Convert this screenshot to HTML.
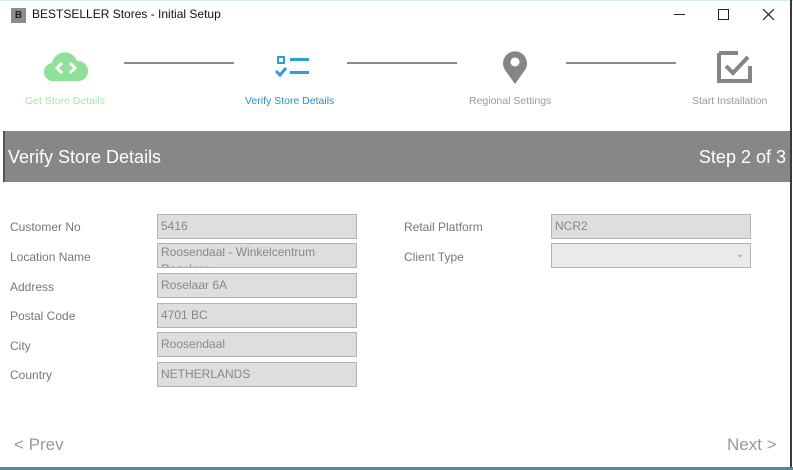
<!DOCTYPE html>
<html><head><style>
body{margin:0;width:793px;height:470px;background:#fff;font-family:"Liberation Sans",sans-serif;position:relative;overflow:hidden}
.a{position:absolute}
.lbl{position:absolute;font-size:12px;color:#777;left:10px}
.fld{position:absolute;background:#dedede;border:1px solid #b3b3b3;font-size:12px;color:#888;line-height:22px;padding-left:3px;box-sizing:border-box;width:200px;height:25px;overflow:hidden}
.line{position:absolute;height:2px;background:#8a8a8a;top:62px;width:110px}
.st{position:absolute;font-size:10.5px;top:95px;color:#999}
</style></head><body>
<div class="a" style="left:0;top:0;width:793px;height:1px;background:#d8eef5"></div>
<div class="a" style="left:790px;top:0;width:2px;height:470px;background:#3a3a3a"></div>
<div class="a" style="left:0;top:467px;width:793px;height:3px;background:#4f8e96"></div>
<div class="a" style="left:11px;top:8px;width:15px;height:15px;background:#8c8c8c;color:#222;font-size:10px;font-weight:bold;text-align:center;line-height:15px">B</div>
<div class="a" style="left:32px;top:7px;font-size:12px;color:#111">BESTSELLER Stores - Initial Setup</div>
<div class="a" style="left:674px;top:14px;width:11px;height:1px;background:#222"></div>
<div class="a" style="left:718px;top:9px;width:9px;height:9px;border:1px solid #222"></div>
<svg class="a" style="left:763px;top:9px" width="11" height="11"><path d="M0 0 L11 11 M11 0 L0 11" stroke="#222" stroke-width="1.2"/></svg>

<svg class="a" style="left:44px;top:52px" width="44" height="30" viewBox="0 0 44 30"><path d="M10 29 A9 9 0 0 1 8 11 A13 13 0 0 1 33 9 A10 10 0 0 1 35 29 Z" fill="#8fe09a"/><path d="M18 11 L13 16 L18 21 M26 11 L31 16 L26 21" stroke="#fff" stroke-width="3" fill="none"/></svg>
<div class="line" style="left:124px"></div>
<svg class="a" style="left:274px;top:51px" width="38" height="30"><rect x="3" y="5" width="8" height="8" fill="#2a9fd8"/><rect x="5" y="7" width="4" height="4" fill="#fff"/><rect x="16" y="7" width="19" height="3" fill="#2a9fd8"/><rect x="16" y="20" width="19" height="3" fill="#2a9fd8"/><path d="M2 20 L6 24 L12 17" stroke="#2a9fd8" stroke-width="3" fill="none"/></svg>
<div class="line" style="left:347px"></div>
<svg class="a" style="left:501px;top:48px" width="28" height="36"><path d="M14 36 L4 22 A12 12 0 1 1 24 22 Z" fill="#858585"/><circle cx="14" cy="14" r="4.5" fill="#fff"/></svg>
<div class="line" style="left:566px"></div>
<svg class="a" style="left:716px;top:48px" width="40" height="36"><path d="M3 5 H22 M3 5 V33 H34 V18" stroke="#858585" stroke-width="4" fill="none"/><path d="M10 18 L17 25 L32 9" stroke="#858585" stroke-width="4" fill="none"/></svg>
<div class="st" style="left:25px;color:#a8e6ae">Get Store Details</div>
<div class="st" style="left:245px;color:#2a8fc0">Verify Store Details</div>
<div class="st" style="left:469px">Regional Settings</div>
<div class="st" style="left:692px">Start Installation</div>

<div class="a" style="left:3px;top:131px;width:787px;height:51px;background:#878787"></div>
<div class="a" style="left:3px;top:131px;width:2px;height:51px;background:#555"></div>
<div class="a" style="left:8px;top:147px;font-size:18px;color:#fff">Verify Store Details</div>
<div class="a" style="right:7px;top:147px;font-size:18px;color:#fff">Step 2 of 3</div>

<div class="lbl" style="top:220px">Customer No</div><div class="fld" style="left:157px;top:214px">5416</div>
<div class="lbl" style="top:250px">Location Name</div><div class="fld" style="left:157px;top:243px;line-height:17px">Roosendaal - Winkelcentrum Roselaar</div>
<div class="lbl" style="top:280px">Address</div><div class="fld" style="left:157px;top:273px">Roselaar 6A</div>
<div class="lbl" style="top:309px">Postal Code</div><div class="fld" style="left:157px;top:303px">4701 BC</div>
<div class="lbl" style="top:339px">City</div><div class="fld" style="left:157px;top:332px">Roosendaal</div>
<div class="lbl" style="top:368px">Country</div><div class="fld" style="left:157px;top:362px">NETHERLANDS</div>

<div class="lbl" style="left:404px;top:220px">Retail Platform</div><div class="fld" style="left:551px;top:214px">NCR2</div>
<div class="lbl" style="left:404px;top:250px">Client Type</div><div class="fld" style="left:551px;top:243px;background:#eaeaea;text-align:right;padding-right:6px;font-size:10px">⌄</div>

<div class="a" style="left:14px;top:435px;font-size:17px;color:#999">&lt; Prev</div>
<div class="a" style="left:727px;top:435px;font-size:17px;color:#999">Next &gt;</div>
</body></html>
